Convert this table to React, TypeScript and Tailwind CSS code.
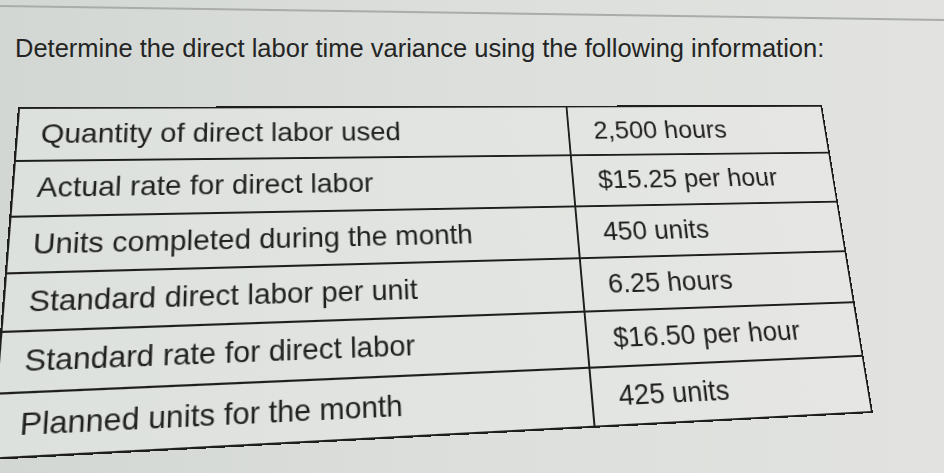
const rows = [
  { label: "Quantity of direct labor used", value: "2,500 hours" },
  { label: "Actual rate for direct labor", value: "$15.25 per hour" },
  { label: "Units completed during the month", value: "450 units" },
  { label: "Standard direct labor per unit", value: "6.25 hours" },
  { label: "Standard rate for direct labor", value: "$16.50 per hour" },
  { label: "Planned units for the month", value: "425 units" },
];

export default function App() {
  return (
    <div className="h-[473px] w-[944px] overflow-hidden bg-gradient-to-r from-[#d3d7d3] via-[#dcdfdb] to-[#e2e3e0] font-['Liberation_Sans',Arial,sans-serif] text-[#1f201f]">
      <div className="pt-[5px]">
        <div className="h-[2px] origin-left rotate-[0.85deg] bg-[#a9aca9]" />
      </div>

      <h1 className="mt-[27px] pl-[15px] text-[25.5px] leading-[28px] text-[#242524]">
        Determine the direct labor time variance using the following information:
      </h1>

      {/* photo is taken at an angle, so the table gets a perspective warp */}
      <div className="ml-[18px] mt-[45px] grid h-[330px] w-[840px] origin-top-left grid-rows-6 border-2 border-[#1d1e1d] bg-gradient-to-r from-[#dde1dd] to-[#e6e7e4] [transform:matrix3d(1.08282,-0.002693,0,0.00015631,-0.076606,0.96588,0,-0.00029409,0,0,1,0,0,0,0,1)]">
        {rows.map((row) => (
          <div
            key={row.label}
            className="grid grid-cols-[549px_1fr] border-b-2 border-[#1d1e1d] last:border-b-0"
          >
            <div className="flex items-center border-r-2 border-[#1d1e1d] pl-[21px] text-[28px]">
              {row.label}
            </div>
            <div className="flex items-center pl-[26px] text-[28px]">
              {row.value}
            </div>
          </div>
        ))}
      </div>
    </div>
  );
}
